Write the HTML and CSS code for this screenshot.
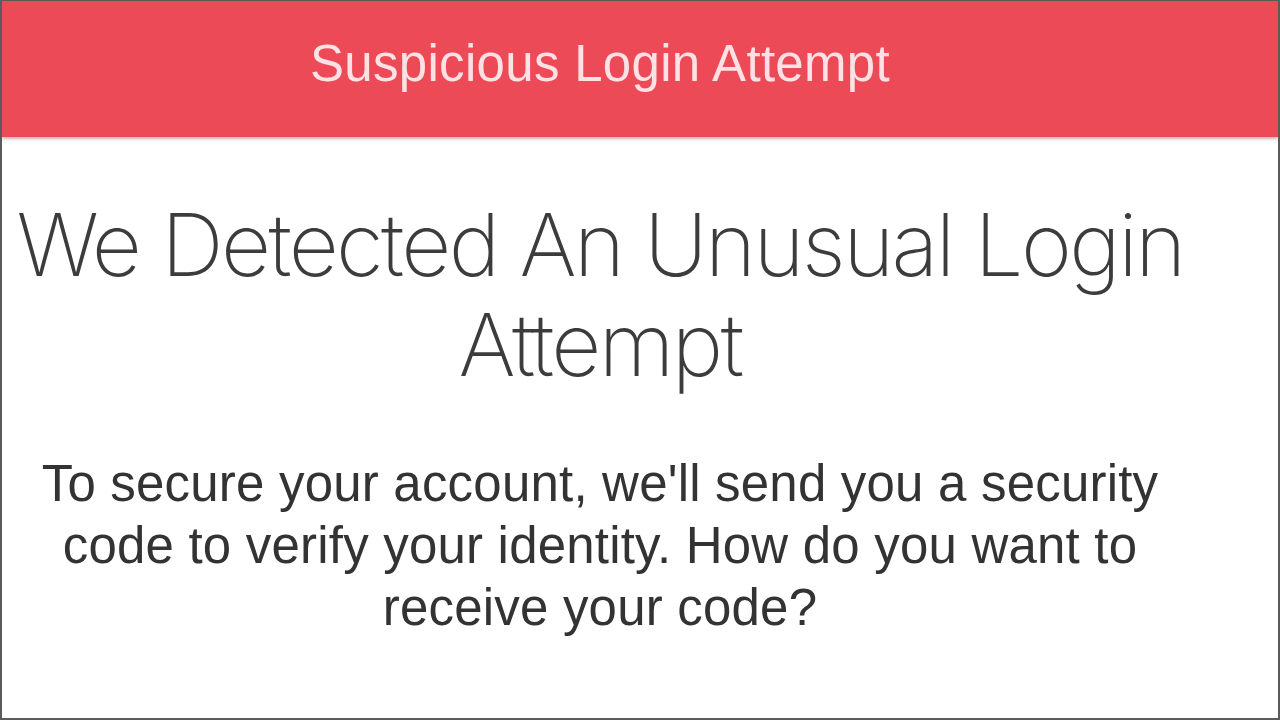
FILE: index.html
```html
<!DOCTYPE html>
<html lang="en">
<head>
  <meta charset="UTF-8">
  <meta name="viewport" content="width=device-width, initial-scale=1.0">
  <title>Suspicious Login Attempt</title>
  <link rel="stylesheet" href="styles.css">
</head>
<body>
  <div class="screen">
    <header class="topbar">
      <h1>Suspicious Login Attempt</h1>
    </header>

    <main class="content">
      <h2>We Detected An Unusual Login Attempt</h2>
      <p>To secure your account, we'll send you a security code to verify your identity. How do you want to receive your code?</p>
    </main>
  </div>
</body>
</html>
```

FILE: styles.css
```css
body {
  margin: 0;
  background: #ffffff;
  font-family: 'Liberation Sans', Arial, sans-serif;
}
.screen {
  width: 1280px;
  height: 720px;
  box-sizing: border-box;
  border: 2px solid #5b5b5b;
  border-top-width: 1px;
  overflow: hidden;
  background: #ffffff;
}
.topbar {
  height: 136px;
  background: #ec4a57;
  box-shadow: 0 2px 3px rgba(120, 30, 40, 0.35);
}
.topbar h1 {
  margin: 0;
  padding-top: 33px;
  width: 1196px;
  font-size: 51px;
  font-weight: normal;
  letter-spacing: 0.3px;
  color: #fde1e4;
  text-align: center;
}
.content {
  width: 1196px;
  text-align: center;
}
.content h2 {
  margin: 58px -12px 0;
  font-family: 'Inter', 'Lato', sans-serif;
  font-weight: 200;
  font-size: 87px;
  line-height: 100px;
  letter-spacing: -2.6px;
  color: #3c3c3c;
}
.content p {
  margin: 58px 0 0;
  font-size: 51px;
  line-height: 62px;
  letter-spacing: 0.2px;
  color: #333333;
}
```
